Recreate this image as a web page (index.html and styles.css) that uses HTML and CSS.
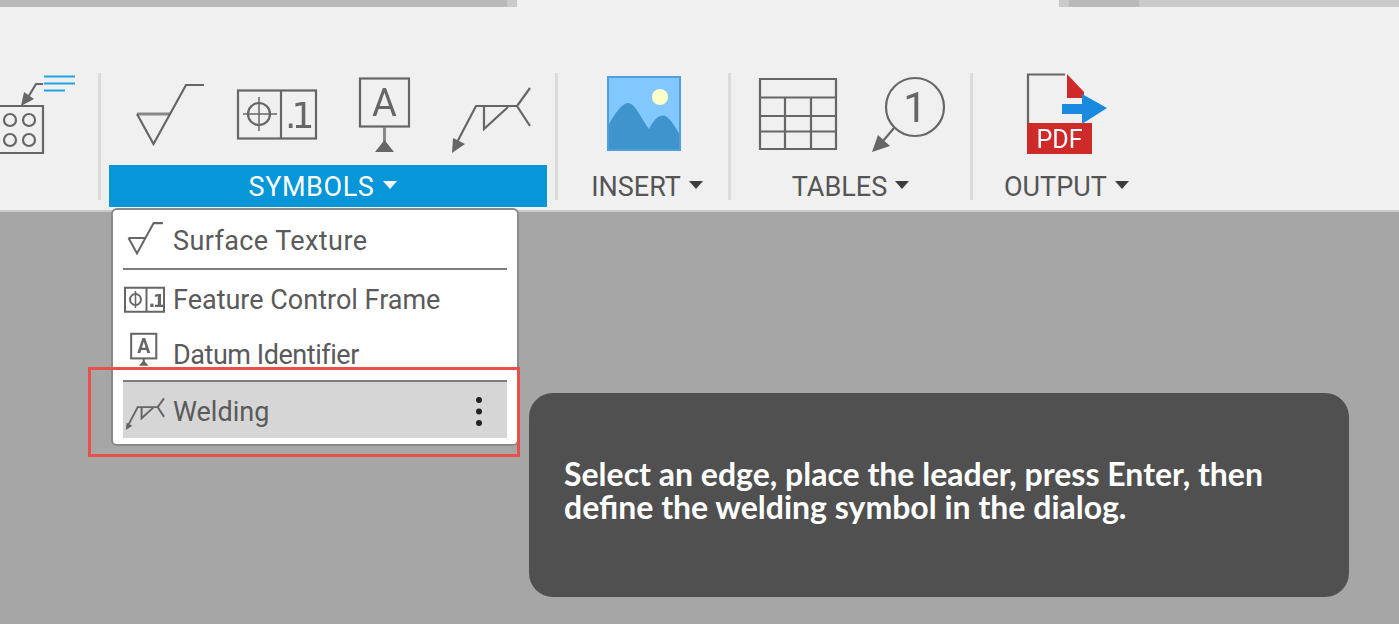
FILE: index.html
```html
<!DOCTYPE html>
<html lang="en">
<head>
<meta charset="utf-8">
<title>Symbols menu</title>
<link rel="stylesheet" href="styles.css">
</head>
<body>
<header class="toolbar">
  <div class="strip">
    <span class="strip-a"></span><span class="strip-b"></span><span class="strip-gap"></span><span class="strip-b"></span><span class="strip-a"></span><span class="strip-c"></span>
  </div>
  <div class="ribbon">
    <section class="group group-first">
      <svg class="icon" width="98" height="80" viewBox="0 0 98 80">
        <path class="ln" d="M-3 31H43V78H-3"/>
        <path class="ln blue" d="M44 1.500H75M44 8.500H75M44 15.500H65"/>
        <path class="ln" d="M43 9H36L27 24"/>
        <path class="fl" d="M21 31L24 17L34 24Z"/>
        <circle class="ln" cx="10" cy="45" r="6"/><circle class="ln" cx="29" cy="45" r="6"/>
        <circle class="ln" cx="10" cy="65" r="6"/><circle class="ln" cx="29" cy="65" r="6"/>
      </svg>
    </section>
    <span class="divider"></span>
    <section class="group group-symbols">
      <div class="icons">
        <svg class="icon" width="72" height="80" viewBox="0 0 72 80">
          <path class="ln thick" d="M3 39H36"/>
          <path class="ln" d="M3 39L19.500 69L52 10H70"/>
        </svg>
        <svg class="icon" width="82" height="80" viewBox="0 0 82 80">
          <rect class="ln" x="2" y="15.500" width="78" height="48"/>
          <path class="ln" d="M45 15.500V63.500"/>
          <circle class="ln" cx="23" cy="39" r="11"/>
          <path class="ln thin" d="M7 39H41M23 22V56"/>
          <text class="gl gl-num" x="49" y="53" font-size="36">.1</text>
        </svg>
        <svg class="icon" width="72" height="80" viewBox="0 0 72 80">
          <rect class="ln" x="12" y="3.500" width="49" height="48"/>
          <text class="gl" x="36.500" y="41" font-size="38" text-anchor="middle">A</text>
          <path class="ln thick" d="M36.500 52V70"/>
          <path class="fl" d="M36.500 65L46 77H27Z"/>
        </svg>
        <svg class="icon" width="82" height="80" viewBox="0 0 82 80">
          <path class="ln" d="M4 73L26 31H67"/>
          <path class="ln" d="M80 13L67 31L80 51"/>
          <path class="ln" d="M34 31V54L58 32"/>
          <path class="fl" d="M2 78L3 63L15 69Z"/>
        </svg>
      </div>
      <div class="label label-active">SYMBOLS<i class="caret"></i></div>
    </section>
    <span class="divider"></span>
    <section class="group group-insert">
      <div class="icons">
        <svg class="icon" width="74" height="80" viewBox="0 0 74 80">
          <rect x="1" y="2" width="72" height="73" fill="#82c8ff"/>
          <path d="M1 51C8 38 14 30 20 28C28 27 33 42 42 54C47 44 53 39 58 41C63 43 67 50 73 60V75H1Z" fill="#3f94cd"/>
          <circle cx="53" cy="22" r="8" fill="#ffffc8"/>
          <rect x="1" y="2" width="72" height="73" fill="none" stroke="#4da0dc" stroke-width="2"/>
        </svg>
      </div>
      <div class="label">INSERT<i class="caret"></i></div>
    </section>
    <span class="divider"></span>
    <section class="group group-tables">
      <div class="icons">
        <svg class="icon" width="78" height="80" viewBox="0 0 78 80">
          <path class="ln" d="M1 4H77V74H1ZM1 22.500H77M1 41H77M1 56.500H77M26 22.500V74M52 22.500V74"/>
        </svg>
        <svg class="icon" width="62" height="80" viewBox="0 0 62 80">
          <circle class="ln" cx="31" cy="32" r="29"/>
          <text class="gl" x="31" y="47" font-size="42" text-anchor="middle">1</text>
          <path class="ln" d="M10 53L-1 66"/>
          <path class="fl" d="M-12 77L-6 60L6 71Z"/>
        </svg>
      </div>
      <div class="label">TABLES<i class="caret"></i></div>
    </section>
    <span class="divider"></span>
    <section class="group group-output">
      <div class="icons">
        <svg class="icon" width="82" height="84" viewBox="0 0 82 84">
          <path class="ln" d="M2 50V1.500H39"/>
          <path d="M41 1L58 19V25H41Z" fill="#cf2a2a"/>
          <rect x="1" y="50" width="65" height="31" fill="#cf2a2a"/>
          <text class="pdf" x="33.500" y="75" font-size="25" text-anchor="middle">PDF</text>
          <path d="M36 31H56V21L81 35L56 51V41H36Z" fill="#1a8ae0"/>
        </svg>
      </div>
      <div class="label">OUTPUT<i class="caret"></i></div>
    </section>
  </div>
</header>

<main class="canvas">
  <ul class="menu">
    <li class="item item-1">
      <svg class="mi" viewBox="0 0 78 78">
        <path class="ln" d="M3 39H36"/>
        <path class="ln" d="M3 39L19.500 69L52 10H70"/>
      </svg>
      <span>Surface Texture</span>
    </li>
    <li class="sep"></li>
    <li class="item item-2">
      <svg class="mi" viewBox="0 0 84 80">
        <rect class="ln" x="2" y="15.500" width="78" height="48"/>
        <path class="ln" d="M45 15.500V63.500"/>
        <circle class="ln" cx="23" cy="39" r="11"/>
        <path class="ln thin" d="M23 22V56"/>
        <text class="gl gl-num" x="49" y="53" font-size="36">.1</text>
      </svg>
      <span>Feature Control Frame</span>
    </li>
    <li class="item item-3">
      <svg class="mi" viewBox="0 0 78 78">
        <rect class="ln" x="12" y="3.500" width="49" height="48"/>
        <text class="gl" x="36.500" y="41" font-size="38" text-anchor="middle">A</text>
        <path class="ln" d="M36.500 52V60"/>
        <path class="fl" d="M36.500 55L46 66H27Z"/>
      </svg>
      <span>Datum Identifier</span>
    </li>
    <li class="sep"></li>
    <li class="item item-4">
      <svg class="mi" viewBox="0 0 82 82">
        <path class="ln" d="M4 73L26 31H67"/>
        <path class="ln" d="M80 13L67 31L80 51"/>
        <path class="ln" d="M34 31V54L58 32"/>
        <path class="fl" d="M2 78L3 63L15 69Z"/>
      </svg>
      <span>Welding</span>
      <svg class="kebab" width="8" height="32" viewBox="0 0 8 32"><circle cx="4" cy="4" r="3"/><circle cx="4" cy="15.500" r="3"/><circle cx="4" cy="27" r="3"/></svg>
    </li>
  </ul>
  <div class="highlight"></div>
  <div class="tip">
    <p>Select an edge, place the leader, press Enter, then<br>define the welding symbol in the dialog.</p>
  </div>
</main>
</body>
</html>
```

FILE: styles.css
```css
* { box-sizing: border-box; }
html, body { margin: 0; padding: 0; }
body {
  width: 1399px;
  height: 624px;
  overflow: hidden;
  background: #a6a6a6;
  font-family: Roboto, "Liberation Sans", sans-serif;
  display: flex;
  flex-direction: column;
}

.toolbar {
  height: 212px;
  flex: none;
  background: #f0f0f0;
  border-bottom: 2px solid #c9c9c9;
}
.strip { display: flex; height: 7px; }
.strip-a { width: 507px; background: #b9b9b9; }
.strip-b { width: 10px; background: #cacaca; }
.strip-gap { width: 542px; }
.strip-a:nth-last-child(2) { width: 70px; }
.strip-c { flex: 1; background: #cacaca; }

.ribbon { display: flex; margin-top: 66px; height: 134px; }
.group { display: flex; flex-direction: column; align-items: center; flex: none; padding-top: 2px; }
.group-first { width: 98px; overflow: hidden; }
.group-symbols { width: 438px; margin: 0 8px; height: 134px; align-items: flex-start; }
.group-insert { width: 170px; }
.group-tables { width: 239px; }
.group-output { width: 240px; align-items: flex-start; }
.divider { width: 3px; height: 127px; background: #dcdcdc; flex: none; }

.icons { display: flex; gap: 30px; height: 90px; }
.group-symbols .icons { margin-left: 25px; }
.group-insert .icons { margin-left: 1px; }
.group-tables .icons { gap: 47px; margin-left: 3px; }
.group-output .icons { margin-left: 53px; margin-top: -2px; height: 92px; }
.icon { display: block; flex: none; overflow: visible; filter: blur(0.4px); }

.ln { fill: none; stroke: #666; stroke-width: 2.200; }
.ln.thin { stroke-width: 1.500; }
.ln.thick { stroke-width: 3; stroke: #888; }
.ln.blue { stroke: #1fa4e4; }
.fl { fill: #666; }
.gl { fill: #666; font-family: Roboto, "Liberation Sans", sans-serif; }
.gl-num { font-family: "DejaVu Sans", sans-serif; letter-spacing: -5px; }
.pdf { fill: #fff; font-family: Roboto, "Liberation Sans", sans-serif; }

.label {
  height: 42px;
  padding-top: 2px;
  display: flex;
  align-items: center;
  justify-content: center;
  font-size: 27px;
  color: #555;
  white-space: nowrap;
}
.label-active { width: 100%; padding-right: 11px; background: #0796d8; color: #fff; letter-spacing: 0.600px; }
.group-insert .label { padding-left: 8px; }
.group-output .label { margin-left: 31px; }
.caret {
  display: block;
  width: 0;
  height: 0;
  margin: -5px 0 0 8px;
  border-left: 7px solid transparent;
  border-right: 7px solid transparent;
  border-top: 8px solid #3c3c3c;
}
.label-active .caret { border-top-color: #fff; }

.canvas { flex: 1; position: relative; }

.menu {
  position: absolute;
  left: 111px;
  top: -4px;
  width: 408px;
  height: 238px;
  margin: 0;
  padding: 0 10px;
  list-style: none;
  background: #fff;
  border: 2px solid #8a8a8a;
  border-radius: 6px;
}
.sep { height: 2px; background: #7d7d7d; }
.item {
  display: flex;
  align-items: center;
  padding-top: 3px;
  font-size: 27px;
  color: #5a5a5a;
  white-space: nowrap;
}
.item-1 { height: 58px; letter-spacing: 0.400px; }
.item-2 { height: 57px; }
.item-3 { height: 53px; letter-spacing: -0.450px; }
.item-4 { height: 56px; background: #d6d6d6; }
.mi { flex: none; width: 42px; height: 40px; margin-left: 1px; margin-right: 7px; overflow: visible; filter: blur(0.4px); }
.item-1 .mi { margin-left: 3px; margin-right: 5px; margin-top: -6px; }
.item-3 .mi { margin-top: -6px; }
.mi .ln { stroke-width: 4; }
.mi .ln.thin { stroke-width: 3; }
.mi .gl { font-weight: 700; }
.kebab { margin-left: auto; margin-right: 24px; fill: #222; }

.highlight {
  position: absolute;
  left: 88px;
  top: 155px;
  width: 432px;
  height: 90px;
  border: 3px solid #e8504a;
}

.tip {
  position: absolute;
  left: 529px;
  top: 181px;
  width: 820px;
  height: 204px;
  padding: 64px 35px 0;
  background: #505050;
  border-radius: 24px;
}
.tip p {
  margin: 0;
  font-family: Lato, "Open Sans", sans-serif;
  font-weight: 700;
  font-size: 32px;
  line-height: 33px;
  color: #fff;
  white-space: nowrap;
}
```
